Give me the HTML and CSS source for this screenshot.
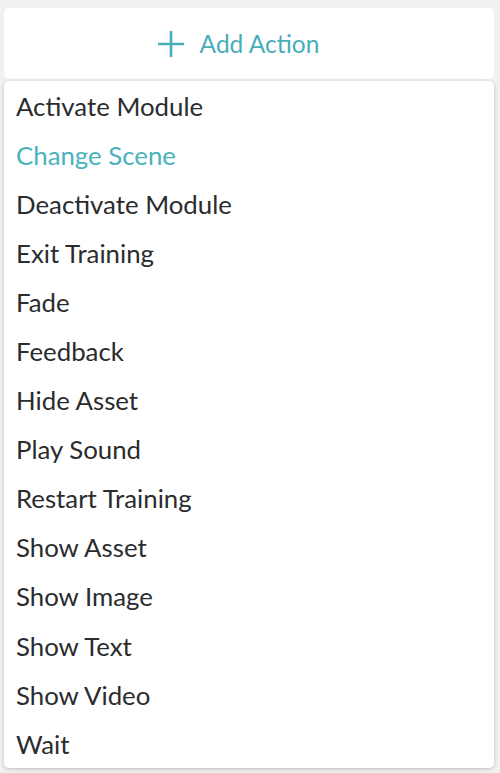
FILE: index.html
```html
<!DOCTYPE html>
<html lang="en">
<head>
    <meta charset="UTF-8">
    <meta name="viewport" content="width=device-width, initial-scale=1.0">
    <title>Add Action</title>
    <link rel="stylesheet" href="styles.css">
</head>
<body>

    <!-- Add action button -->
    <div class="add-card">
        <button class="add-button">
            <svg class="plus" viewBox="0 0 28 28" width="28" height="28">
                <path d="M14 1 V27 M1 14 H27" stroke="currentColor" stroke-width="2.6" fill="none"/>
            </svg>
            <span>Add Action</span>
        </button>
    </div>

    <!-- Action list -->
    <ul class="menu">
        <li>Activate Module</li>
        <li class="active">Change Scene</li>
        <li>Deactivate Module</li>
        <li>Exit Training</li>
        <li>Fade</li>
        <li>Feedback</li>
        <li>Hide Asset</li>
        <li>Play Sound</li>
        <li>Restart Training</li>
        <li>Show Asset</li>
        <li>Show Image</li>
        <li>Show Text</li>
        <li>Show Video</li>
        <li>Wait</li>
    </ul>

</body>
</html>
```

FILE: styles.css
```css
/* General styling */
* {
    margin: 0;
    padding: 0;
    box-sizing: border-box;
    font-family: Lato, "Noto Sans", sans-serif;
}

body {
    background-color: #f1f1f1;
    padding: 8px 6px 0 4px;
    height: 773px;
    overflow: hidden;
}

/* Add action card */
.add-card {
    background-color: #fff;
    border-radius: 5px;
    height: 71px;
}

.add-button {
    width: 100%;
    height: 100%;
    border: none;
    background: none;
    color: #47adb9;
    display: flex;
    align-items: center;
    justify-content: center;
    gap: 15px;
    padding-right: 22px;
    font-size: 24.5px;
    cursor: pointer;
}

.plus {
    display: block;
}

/* Dropdown list */
.menu {
    list-style-type: none;
    background-color: #fff;
    border-radius: 5px;
    margin-top: 2px;
    padding: 0;
    box-shadow: 0 1px 4px rgba(0, 0, 0, 0.22);
}

.menu li {
    height: 49.1px;
    display: flex;
    align-items: center;
    padding-left: 12px;
    font-size: 25.8px;
    color: #2a2c2e;
}

.menu li.active {
    color: #4ab2bd;
}
```
